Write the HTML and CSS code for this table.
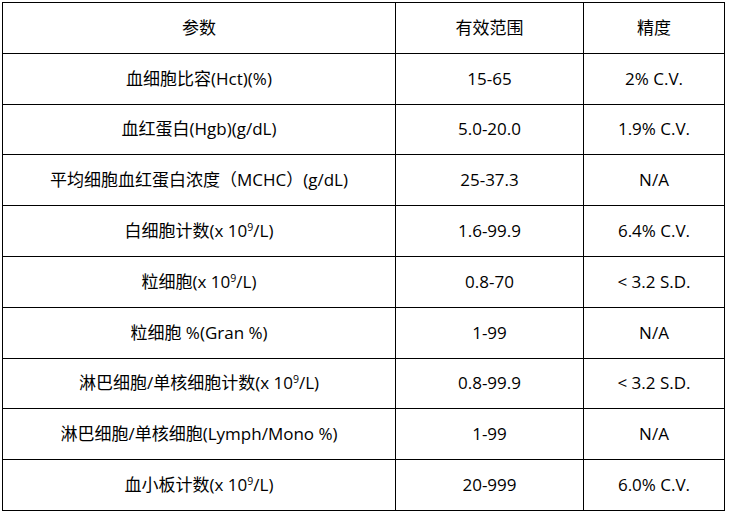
FILE: index.html
```html
<!DOCTYPE html>
<html lang="zh-CN">
<head>
<meta charset="utf-8">
<link rel="stylesheet" href="styles.css">
</head>
<body>
<div class="table">
  <div class="cell h"><span>参数</span></div><div class="cell h"><span>有效范围</span></div><div class="cell h"><span>精度</span></div>
  <div class="cell"><span>血细胞比容(Hct)(%)</span></div><div class="cell"><span>15-65</span></div><div class="cell"><span>2% C.V.</span></div>
  <div class="cell"><span>血红蛋白(Hgb)(g/dL)</span></div><div class="cell"><span>5.0-20.0</span></div><div class="cell"><span>1.9% C.V.</span></div>
  <div class="cell"><span>平均细胞血红蛋白浓度（MCHC）(g/dL)</span></div><div class="cell"><span>25-37.3</span></div><div class="cell"><span>N/A</span></div>
  <div class="cell"><span>白细胞计数(x 10<sup>9</sup>/L)</span></div><div class="cell"><span>1.6-99.9</span></div><div class="cell"><span>6.4% C.V.</span></div>
  <div class="cell"><span>粒细胞(x 10<sup>9</sup>/L)</span></div><div class="cell"><span>0.8-70</span></div><div class="cell"><span>&lt; 3.2 S.D.</span></div>
  <div class="cell"><span>粒细胞 %(Gran %)</span></div><div class="cell"><span>1-99</span></div><div class="cell"><span>N/A</span></div>
  <div class="cell"><span>淋巴细胞/单核细胞计数(x 10<sup>9</sup>/L)</span></div><div class="cell"><span>0.8-99.9</span></div><div class="cell"><span>&lt; 3.2 S.D.</span></div>
  <div class="cell"><span>淋巴细胞/单核细胞(Lymph/Mono %)</span></div><div class="cell"><span>1-99</span></div><div class="cell"><span>N/A</span></div>
  <div class="cell"><span>血小板计数(x 10<sup>9</sup>/L)</span></div><div class="cell"><span>20-999</span></div><div class="cell"><span>6.0% C.V.</span></div>
</div>
</body>
</html>
```
FILE: styles.css
```css
html, body {
  margin: 0;
  background: #fff;
}
body {
  padding: 2px;
  font-family: "Open Sans", "Noto Sans CJK SC", sans-serif;
  font-size: 17px;
  color: #000;
}
.table {
  display: grid;
  width: 721px;
  grid-template-columns: 392px 187px 140px;
  grid-template-rows: 50px 50px 49px 50px 50px 50px 50px 49px 50px 50px;
  gap: 1px;
  padding: 1px;
  background: #000;
}
.cell {
  background: #fff;
  display: flex;
  align-items: center;
  justify-content: center;
  white-space: nowrap;
  line-height: 1;
  padding-bottom: 2px;
}
sup {
  font-size: 0.62em;
  vertical-align: 0.55em;
  line-height: 0;
}
```
